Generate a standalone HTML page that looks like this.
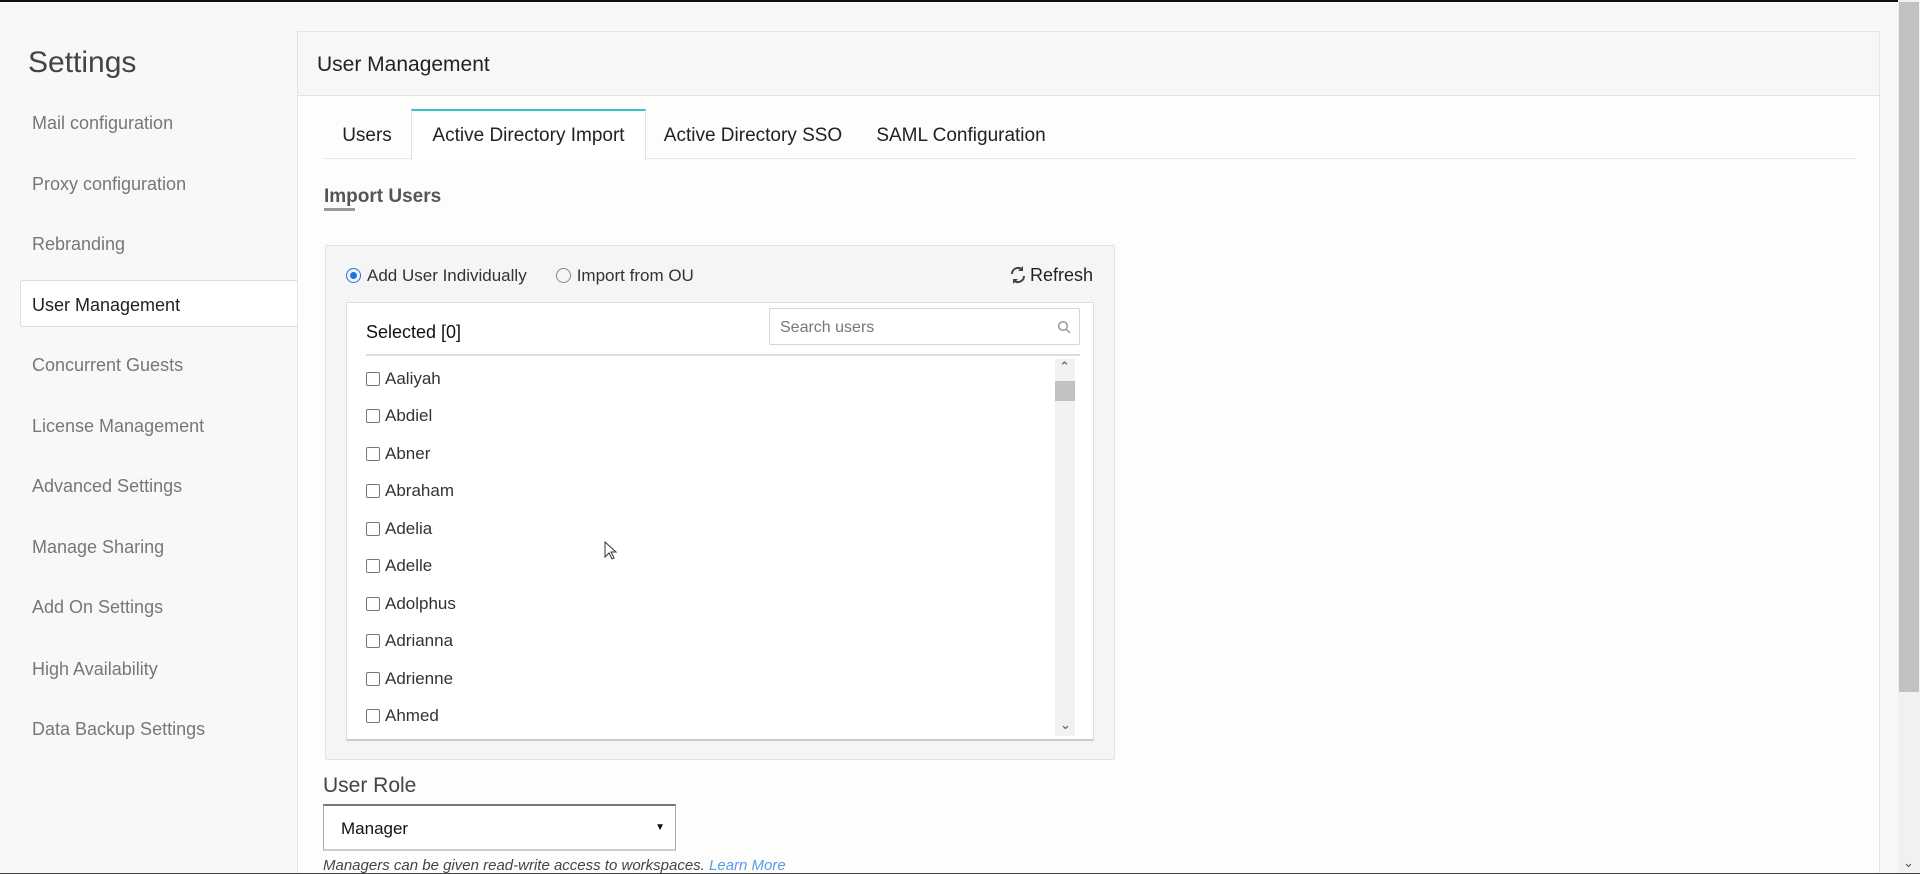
<!DOCTYPE html>
<html><head><meta charset="utf-8"><style>
*{box-sizing:border-box;margin:0;padding:0}
body{width:1920px;height:874px;overflow:hidden;background:#f8f8f9;font-family:"Liberation Sans",sans-serif;color:#222;position:relative}
.abs{position:absolute}
.topline{left:0;top:0;width:1920px;height:2px;background:#111}
.side{left:32px;font-size:18px;color:#777;line-height:22px}
.panel{left:297px;top:31px;width:1583px;height:843px;background:#fdfdfc;border:1px solid #e4e4e4;border-bottom:none}
.phead{left:0;top:0;width:100%;height:64px;background:#f7f7f8;border-bottom:1px solid #e2e2e2}
.tab{top:77px;height:50px;font-size:19px;line-height:54px;color:#222;text-align:center}
.row{left:366px;font-size:17px;color:#333;height:20px;line-height:20px}
.cb{display:inline-block;width:14px;height:14px;border:1.5px solid #777;border-radius:2px;vertical-align:-2px;margin-right:5px;background:#fff}
</style></head><body>
<div class="abs topline"></div>
<div class="abs" style="left:28px;top:46px;font-size:30px;color:#444">Settings</div>
<div class="abs" style="left:20px;top:280px;width:277px;height:47px;background:#fff;border:1px solid #ddd;border-right:none;border-radius:3px 0 0 3px"></div>
<div class="abs side" style="top:112px">Mail configuration</div>
<div class="abs side" style="top:173px">Proxy configuration</div>
<div class="abs side" style="top:233px">Rebranding</div>
<div class="abs side" style="top:294px;color:#222">User Management</div>
<div class="abs side" style="top:354px">Concurrent Guests</div>
<div class="abs side" style="top:415px">License Management</div>
<div class="abs side" style="top:475px">Advanced Settings</div>
<div class="abs side" style="top:536px">Manage Sharing</div>
<div class="abs side" style="top:596px">Add On Settings</div>
<div class="abs side" style="top:658px">High Availability</div>
<div class="abs side" style="top:718px">Data Backup Settings</div>

<div class="abs panel">
 <div class="abs phead"></div>
 <div class="abs" style="left:19px;top:21px;font-size:21px;color:#222">User Management</div>
 <div class="abs" style="left:25px;top:126px;width:1533px;height:1px;background:#e6e6e6"></div>
 <div class="abs tab" style="left:25px;width:88px">Users</div>
 <div class="abs tab" style="left:113px;width:235px;background:#fff;border:1px solid #e2e2e2;border-top:2px solid #3fbfc9;border-bottom:none;height:51px;line-height:50px">Active Directory Import</div>
 <div class="abs tab" style="left:355px;width:200px">Active Directory SSO</div>
 <div class="abs tab" style="left:563px;width:200px">SAML Configuration</div>
 <div class="abs" style="left:26px;top:154px;font-size:19px;font-weight:bold;color:#555">Import Users</div>
 <div class="abs" style="left:26px;top:176px;width:31px;height:3px;background:#999"></div>
 <div class="abs" style="left:27px;top:213px;width:790px;height:515px;background:#f5f5f6;border:1px solid #e2e2e2;border-radius:2px"></div>
 <div class="abs" style="left:48px;top:234px;font-size:17px;color:#333"><span style="display:inline-block;width:15px;height:15px;border:1.5px solid #1a73e8;border-radius:50%;vertical-align:-2px;position:relative;margin-right:6px"><span style="position:absolute;left:2.5px;top:2.5px;width:7px;height:7px;border-radius:50%;background:#1a73e8"></span></span>Add User Individually<span style="display:inline-block;width:15px;height:15px;border:1.5px solid #888;border-radius:50%;vertical-align:-2px;margin:0 6px 0 29px"></span>Import from OU</div>
 <div class="abs" style="left:711px;top:233px;font-size:18px;color:#222"><svg width="18" height="20" viewBox="0 0 18 20" style="vertical-align:-4px;margin-right:3px"><path d="M3 9a6 6 0 0 1 10-4.5M15 11a6 6 0 0 1-10 4.5" fill="none" stroke="#444" stroke-width="2"/><path d="M14 1v5h-5zM4 19v-5h5z" fill="#444"/></svg>Refresh</div>
 <div class="abs" style="left:48px;top:270px;width:748px;height:439px;background:#fff;border:1px solid #ddd;border-bottom:2px solid #ccc"></div>
 <div class="abs" style="left:68px;top:290px;font-size:18px;color:#111">Selected [0]</div>
 <div class="abs" style="left:471px;top:276px;width:311px;height:37px;border:1px solid #d6d6d6;border-radius:2px;background:#fff;font-size:16px;color:#777;padding:10px 10px">Search users<svg width="14" height="14" viewBox="0 0 14 14" style="position:absolute;right:8px;top:11px"><circle cx="6" cy="6" r="4.3" fill="none" stroke="#999" stroke-width="1.5"/><path d="M9 9l4 4" stroke="#999" stroke-width="1.5"/></svg></div>
 <div class="abs" style="left:68px;top:322px;width:714px;height:2px;background:#ddd"></div>
 <div class="abs" style="left:757px;top:327px;width:20px;height:377px;background:#f1f1f1"></div>
 <div class="abs" style="left:757px;top:349px;width:20px;height:20px;background:#c1c1c1"></div>
 <div class="abs" style="left:761px;top:327px;font-size:13px;color:#555">&#8963;</div>
 <div class="abs" style="left:762px;top:685px;font-size:13px;color:#555">&#8964;</div>
</div>

<div class="abs row" style="top:369px"><span class="cb"></span>Aaliyah</div>
<div class="abs row" style="top:406px"><span class="cb"></span>Abdiel</div>
<div class="abs row" style="top:444px"><span class="cb"></span>Abner</div>
<div class="abs row" style="top:481px"><span class="cb"></span>Abraham</div>
<div class="abs row" style="top:519px"><span class="cb"></span>Adelia</div>
<div class="abs row" style="top:556px"><span class="cb"></span>Adelle</div>
<div class="abs row" style="top:594px"><span class="cb"></span>Adolphus</div>
<div class="abs row" style="top:631px"><span class="cb"></span>Adrianna</div>
<div class="abs row" style="top:669px"><span class="cb"></span>Adrienne</div>
<div class="abs row" style="top:706px"><span class="cb"></span>Ahmed</div>

<svg class="abs" style="left:604px;top:541px" width="14" height="20" viewBox="0 0 14 20"><path d="M1 1v15l4-4 3 6 2-1-3-6h5z" fill="#fff" stroke="#333" stroke-width="1"/></svg>

<div class="abs" style="left:323px;top:774px;font-size:21px;color:#444">User Role</div>
<div class="abs" style="left:323px;top:804px;width:353px;height:47px;background:#fff;border:1px solid #aaa;border-top:2px solid #777;border-bottom:2px solid #ccc;font-size:17px;color:#111;padding:13px 17px">Manager<span style="position:absolute;right:10px;top:16px;font-size:10px">&#9660;</span></div>
<div class="abs" style="left:323px;top:857px;font-size:15px;font-style:italic;color:#444">Managers can be given read-write access to workspaces. <span style="color:#5b9be8">Learn More</span></div>

<div class="abs" style="left:1898px;top:0;width:22px;height:874px;background:#f1f1f1"></div>
<div class="abs" style="left:1899px;top:2px;width:20px;height:690px;background:#c1c1c1"></div>
<div class="abs" style="left:1903px;top:855px;font-size:13px;color:#555">&#8964;</div>
<div class="abs" style="left:0;top:873px;width:1920px;height:1px;background:#444"></div>
</body></html>
